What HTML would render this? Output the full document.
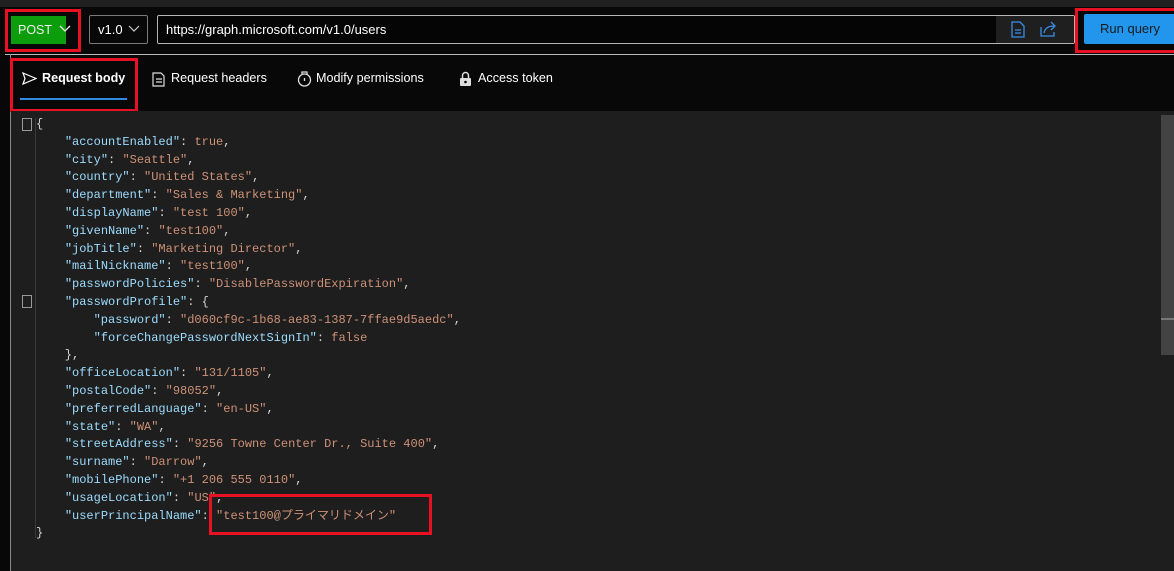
<!DOCTYPE html>
<html><head><meta charset="utf-8"><style>
*{margin:0;padding:0;box-sizing:border-box}
body{width:1174px;height:571px;overflow:hidden;background:#080808;font-family:"Segoe UI","Liberation Sans",sans-serif;position:relative;color:#fff}
.a{position:absolute}
.red{position:absolute;border:3px solid #e81123}
.code{position:absolute;left:36px;top:116px;font-family:"Liberation Mono","Noto Sans CJK JP",monospace;font-size:12px;line-height:17.8px;color:#d4d4d4;white-space:pre}
.k{color:#9cdcfe}.s{color:#ce9178}
.tab{position:absolute;top:71px;font-size:12.6px;color:#fff}
</style></head><body>
<div class="a" style="left:0;top:0;width:1174px;height:7px;background:#202020"></div>
<div class="a" style="left:11px;top:16px;width:55px;height:28px;background:#0b9d0b;font-size:12.5px;line-height:28px;padding-left:7px;color:#eee">POST</div>
<svg class="a" style="left:59px;top:25px" width="12" height="8"><path d="M1 1l5 5 5-5" stroke="#eee" fill="none" stroke-width="1.3"/></svg>
<div class="red" style="left:5px;top:9px;width:76px;height:43px"></div>
<div class="a" style="left:89px;top:15px;width:59px;height:29px;border:1px solid #7a7a7a;border-radius:2px;font-size:13px;line-height:27px;padding-left:8px">v1.0</div>
<svg class="a" style="left:128px;top:25px" width="12" height="8"><path d="M1 1l5 5 5-5" stroke="#ccc" fill="none" stroke-width="1.2"/></svg>
<div class="a" style="left:157px;top:15px;width:918px;height:29px;border:1px solid #b5b5b5;border-radius:2px;background:#050505;font-size:13px;line-height:27px;padding-left:8px">https://graph.microsoft.com/v1.0/users</div>
<div class="a" style="left:996px;top:16px;width:78px;height:27px;background:#1f1f1f"></div>
<svg class="a" style="left:1011px;top:21px" width="14" height="17"><path d="M1 1h8l4 4v11H1z" stroke="#3a8ee6" fill="none" stroke-width="1.3"/><path d="M4 9h6M4 12h6" stroke="#3a8ee6" stroke-width="1.3"/></svg>
<svg class="a" style="left:1040px;top:21px" width="18" height="16"><path d="M1 6v9h13v-4" stroke="#3a8ee6" fill="none" stroke-width="1.3"/><path d="M4 12c1-5 5-7 10-7M11 1l4 4-4 4" stroke="#3a8ee6" fill="none" stroke-width="1.3"/></svg>
<div class="a" style="left:1084px;top:14px;width:95px;height:30px;background:#2295ec;border-radius:2px;font-size:13px;line-height:30px;padding-left:16px;color:#1a1a1a">Run query</div>
<div class="red" style="left:1075px;top:8px;width:102px;height:45px"></div>
<div class="a" style="left:5px;top:54px;width:1169px;height:1px;background:#bbb"></div>
<div class="a" style="left:10px;top:54px;width:1px;height:517px;background:#888"></div>
<svg class="a" style="left:22px;top:72px" width="15" height="13"><path d="M1 1l13 5.5L1 12l2-5.5z" stroke="#fff" fill="none" stroke-width="1.2"/></svg>
<div class="tab" style="left:42px;font-weight:bold">Request body</div>
<div class="a" style="left:20px;top:98px;width:107px;height:2px;background:#2f8be0"></div>
<div class="red" style="left:10px;top:58px;width:128px;height:54px"></div>
<svg class="a" style="left:152px;top:71px" width="14" height="16"><path d="M1 2h8l3 3v10H1z" stroke="#ddd" fill="none" stroke-width="1.2"/><path d="M4 8h6M4 11h6" stroke="#ddd" stroke-width="1.2"/></svg>
<div class="tab" style="left:171px">Request headers</div>
<svg class="a" style="left:297px;top:71px" width="15" height="16"><circle cx="7.5" cy="9" r="6" stroke="#ddd" fill="none" stroke-width="1.3"/><path d="M5 3V1h5v2M7.5 7v3" stroke="#ddd" fill="none" stroke-width="1.3"/></svg>
<div class="tab" style="left:316px">Modify permissions</div>
<svg class="a" style="left:459px;top:71px" width="13" height="16"><path d="M3.5 7V4.5a3 3 0 016 0V7" stroke="#ddd" fill="none" stroke-width="1.5"/><rect x="1" y="7" width="11" height="8" rx="1" fill="#ddd"/><circle cx="6.5" cy="11" r="1.3" fill="#000"/></svg>
<div class="tab" style="left:478px">Access token</div>
<div class="a" style="left:11px;top:111px;width:1163px;height:460px;background:#1e1e1e"></div>
<div class="a" style="left:1161px;top:115px;width:13px;height:240px;background:#434343"></div>
<div class="a" style="left:1161px;top:318px;width:13px;height:2px;background:#777"></div>
<div class="a" style="left:22px;top:118px;width:10px;height:13px;border:1px solid #999"></div>
<div class="a" style="left:22px;top:295px;width:10px;height:13px;border:1px solid #999"></div>
<div class="a" style="left:35px;top:118px;width:1px;height:420px;background:#3a3a3a"></div>
<div class="code">{
    <span class="k">"accountEnabled"</span>: <span class="s">true</span>,
    <span class="k">"city"</span>: <span class="s">"Seattle"</span>,
    <span class="k">"country"</span>: <span class="s">"United States"</span>,
    <span class="k">"department"</span>: <span class="s">"Sales &amp; Marketing"</span>,
    <span class="k">"displayName"</span>: <span class="s">"test 100"</span>,
    <span class="k">"givenName"</span>: <span class="s">"test100"</span>,
    <span class="k">"jobTitle"</span>: <span class="s">"Marketing Director"</span>,
    <span class="k">"mailNickname"</span>: <span class="s">"test100"</span>,
    <span class="k">"passwordPolicies"</span>: <span class="s">"DisablePasswordExpiration"</span>,
    <span class="k">"passwordProfile"</span>: {
        <span class="k">"password"</span>: <span class="s">"d060cf9c-1b68-ae83-1387-7ffae9d5aedc"</span>,
        <span class="k">"forceChangePasswordNextSignIn"</span>: <span class="s">false</span>
    },
    <span class="k">"officeLocation"</span>: <span class="s">"131/1105"</span>,
    <span class="k">"postalCode"</span>: <span class="s">"98052"</span>,
    <span class="k">"preferredLanguage"</span>: <span class="s">"en-US"</span>,
    <span class="k">"state"</span>: <span class="s">"WA"</span>,
    <span class="k">"streetAddress"</span>: <span class="s">"9256 Towne Center Dr., Suite 400"</span>,
    <span class="k">"surname"</span>: <span class="s">"Darrow"</span>,
    <span class="k">"mobilePhone"</span>: <span class="s">"+1 206 555 0110"</span>,
    <span class="k">"usageLocation"</span>: <span class="s">"US"</span>,
    <span class="k">"userPrincipalName"</span>: <span class="s">"test100@プライマリドメイン"</span>
}</div>
<div class="red" style="left:209px;top:494px;width:223px;height:41px"></div>
</body></html>
